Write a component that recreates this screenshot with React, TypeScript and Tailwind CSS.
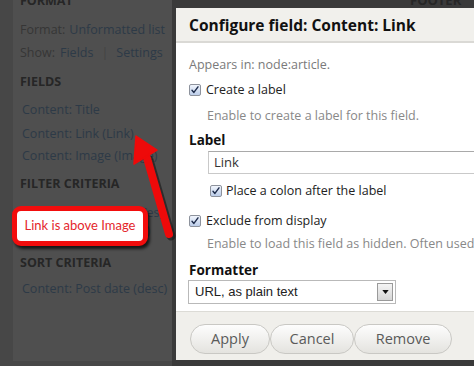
import React from "react";

const Check: React.FC = () => (
  <span className="flex h-[12px] w-[12px] shrink-0 items-center justify-center rounded-[2px] border border-[#8d929c] bg-linear-to-b from-[#f1f5fc] to-[#bccde9]">
    <svg viewBox="0 0 12 12" className="h-[10px] w-[10px]">
      <path
        d="M2.4 6.3 L4.7 8.9 L9.6 2.2"
        fill="none"
        stroke="#1d2b4a"
        strokeWidth="1.7"
        strokeLinecap="round"
        strokeLinejoin="round"
      />
    </svg>
  </span>
);

const PageRow: React.FC<{ className?: string; children: React.ReactNode }> = ({ className, children }) => (
  <div className={`flex h-[22px] items-center whitespace-nowrap ${className ?? ""}`}>{children}</div>
);

const App: React.FC = () => {
  return (
    <div className="relative flex h-[366px] w-[474px] overflow-hidden bg-[#474747] font-['Open_Sans',sans-serif]">
      {/* dimmed views page behind the dialog */}
      <div className="w-[172px] shrink-0 pl-[13px]">
        <div className="h-[361px] overflow-hidden bg-[#4f4f4f] pl-[7px] text-[12.5px] text-[#363636]">
          <div className="-mt-[8px] flex h-[18px] items-center font-bold text-[#262626]">FORMAT</div>
          <PageRow className="mt-[9px]">
            <span className="mr-[4px]">Format:</span>
            <span className="text-[#2d3a47]">Unformatted list</span>
          </PageRow>
          <PageRow className="mt-[1px]">
            <span className="mr-[5px]">Show:</span>
            <span className="text-[#2d3a47]">Fields</span>
            <span className="px-[8px] text-[#444]">|</span>
            <span className="text-[#2d3a47]">Settings</span>
          </PageRow>
          <PageRow className="mt-[7px] font-bold text-[#262626]">FIELDS</PageRow>
          <PageRow className="mt-[6px] pl-[2px] text-[#2d3a47]">Content: Title</PageRow>
          <PageRow className="mt-[2px] pl-[2px] text-[#2d3a47]">Content: Link (Link)</PageRow>
          <PageRow className="pl-[2px] text-[#2d3a47]">Content: Image (Image)</PageRow>
          <PageRow className="mt-[6px] font-bold text-[#262626]">FILTER CRITERIA</PageRow>
          <PageRow className="mt-[7px] pl-[2px] text-[#2d3a47]">Content: Published (Yes)</PageRow>
          <PageRow className="-mt-[4px] pl-[2px] text-[#2d3a47]">Content: Type (Article)</PageRow>
          <PageRow className="mt-[10px] font-bold text-[#262626]">SORT CRITERIA</PageRow>
          <PageRow className="mt-[4px] pl-[2px] text-[#2d3a47]">Content: Post date (desc)</PageRow>
        </div>
      </div>

      {/* dialog column */}
      <div className="flex min-w-0 flex-1 flex-col bg-[#3a3a3a]">
        <div className="h-[8px] shrink-0 overflow-hidden pl-[238px]">
          <div className="-mt-[9px] text-[13px] font-bold leading-[18px] text-[#262626]">FOOTER</div>
        </div>
        <div className="ml-[4px] flex h-[352px] w-[340px] shrink-0 flex-col bg-white">
          <div className="flex h-[35px] shrink-0 items-center border-b-2 border-[#dad9d5] bg-[#f1f0ec] pt-[2px] pl-[13px] text-[15.5px] font-bold text-[#111]">
            Configure field: Content: Link
          </div>
          <div className="flex h-[268px] shrink-0 flex-col pl-[13px] text-[12.5px] whitespace-nowrap">
            <div className="mt-[13px] flex h-[18px] items-center text-[#7a7a7a]">Appears in: node:article.</div>
            <div className="mt-[7px] flex h-[18px] items-center gap-[5px] text-[#222]">
              <Check />
              <span>Create a label</span>
            </div>
            <div className="mt-[8px] flex h-[18px] items-center pl-[18px] text-[#888]">
              Enable to create a label for this field.
            </div>
            <div className="mt-[6px] flex h-[18px] items-center text-[13.5px] font-bold text-[#111]">Label</div>
            <div className="mt-[2px] ml-[19px] flex h-[23px] w-[300px] shrink-0 items-center border border-[#c9c9c9] border-t-[#a9a9a9] pl-[5px] text-[13px] text-[#333]">
              Link
            </div>
            <div className="mt-[8px] ml-[21px] flex h-[18px] items-center gap-[4px] text-[#222]">
              <Check />
              <span>Place a colon after the label</span>
            </div>
            <div className="mt-[12px] flex h-[18px] items-center gap-[5px] text-[#222]">
              <Check />
              <span>Exclude from display</span>
            </div>
            <div className="mt-[5px] flex h-[18px] items-center pl-[18px] text-[#888]">
              Enable to load this field as hidden. Often used to group fields, or to use as token in another field.
            </div>
            <div className="mt-[8px] flex h-[18px] items-center text-[13.5px] font-bold text-[#111]">Formatter</div>
            <div className="mt-[1px] -ml-[1px] flex h-[24px] w-[208px] items-center justify-between border border-[#b9b9b9] pr-[2px] pl-[6px] font-['Liberation_Sans',Arial,sans-serif] text-[13px] text-[#222]">
              <span>URL, as plain text</span>
              <span className="flex h-[18px] w-[16px] items-center justify-center border border-[#9a9a9a] bg-linear-to-b from-[#f4f4f4] to-[#d6d6d6]">
                <svg viewBox="0 0 8 5" className="h-[4px] w-[7px]">
                  <path d="M0 0 H8 L4 5 Z" fill="#111" />
                </svg>
              </span>
            </div>
          </div>
          <div className="flex flex-1 items-start border-t border-[#dcdbd6] bg-[#f0efeb] pt-[12px] pl-[14px] text-[14.5px] text-[#5a5a5a]">
            <button className="flex h-[30px] w-[80px] items-center justify-center rounded-full border border-[#c9c8c4] bg-linear-to-b from-[#fdfdfd] to-[#e4e3df]">
              Apply
            </button>
            <button className="flex h-[30px] w-[84px] items-center justify-center rounded-full border border-[#c9c8c4] bg-linear-to-b from-[#fdfdfd] to-[#e4e3df]">
              Cancel
            </button>
            <button className="flex h-[30px] w-[98px] items-center justify-center rounded-full border border-[#c9c8c4] bg-linear-to-b from-[#fdfdfd] to-[#e4e3df]">
              Remove
            </button>
          </div>
        </div>
      </div>

      {/* annotation: arrow */}
      <svg className="pointer-events-none absolute top-0 left-0" width="474" height="366" viewBox="0 0 474 366">
        <g transform="translate(2 2)" opacity="0.55">
          <line x1="147" y1="158" x2="169" y2="234" stroke="#111" strokeWidth="9" strokeLinecap="round" />
        </g>
        <line x1="147" y1="158" x2="169" y2="234" stroke="#ee0a0a" strokeWidth="8" strokeLinecap="round" />
        <polygon points="136,136 157,150 134,164" fill="#ee0a0a" stroke="#ee0a0a" strokeWidth="1.5" strokeLinejoin="round" />
      </svg>

      {/* annotation: callout */}
      <div className="absolute top-[206px] left-[12px] flex h-[40px] w-[136px] items-center justify-center rounded-[9px] border-[5px] border-[#f20d0d] bg-white font-['Lato',sans-serif] text-[13px] text-[#e4262b] shadow-[2px_3px_3px_rgba(0,0,0,0.7)]">
        Link is above Image
      </div>
    </div>
  );
};

export default App;
